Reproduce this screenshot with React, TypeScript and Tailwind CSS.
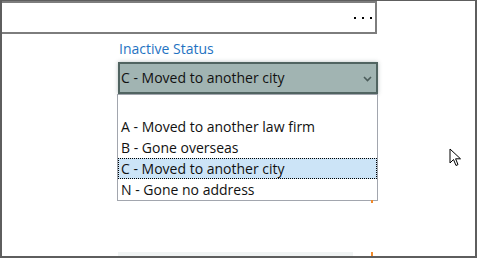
import React from "react";

const OPTIONS = [
  "",
  "A - Moved to another law firm",
  "B - Gone overseas",
  "C - Moved to another city",
  "N - Gone no address",
];

const SELECTED = "C - Moved to another city";

export default function App() {
  return (
    <div
      className="relative w-[477px] h-[258px] overflow-hidden bg-white border-x-2 border-b-2 border-t border-[#5e5e5e] text-[14px] text-[#111]"
      style={{ fontFamily: '"Open Sans", "Noto Sans", sans-serif' }}
    >
      {/* text box with ellipsis button */}
      <div className="w-[375px] h-[33px] border-2 border-l-0 border-[#7d7d7d] flex items-center justify-end pr-[3px]">
        <div className="flex gap-[6px] items-center">
          <span className="block w-[2px] h-[2px] bg-black" />
          <span className="block w-[2px] h-[2px] bg-black" />
          <span className="block w-[2px] h-[2px] bg-black" />
        </div>
      </div>

      {/* Inactive status field */}
      <div className="ml-[115px] mt-[5px] w-[261px]">
        <div className="ml-[2px] h-[20px] leading-[20px] text-[#1f73c2]">Inactive Status</div>
        <div className="mt-[3px] ml-[1px] h-[32px] border-2 border-[#516461] bg-[#a1b4b2] shadow-[0_0_4px_rgba(60,80,80,0.35)] flex items-center justify-between pl-[1px] pr-[4px]">
          <span className="leading-[20px]">{SELECTED}</span>
          <svg width="9" height="6" viewBox="0 0 9 6" className="mt-[1px]">
            <polyline points="1,1 4.5,4.5 8,1" fill="none" stroke="#4b5c5a" strokeWidth="1.6" />
          </svg>
        </div>
        <div className="border border-[#a2a6ae] bg-white">
          {OPTIONS.map((o, i) => {
            const sel = o === SELECTED;
            return (
              <div
                key={i}
                className={
                  "h-[21px] leading-[19px] pl-[2px] border border-dotted " +
                  (sel ? "bg-[#cce4f7] border-black" : "border-transparent")
                }
              >
                {o}
              </div>
            );
          })}
        </div>
      </div>

      {/* faded control below */}
      <div className="absolute left-[116px] top-[251px] w-[235px] h-[5px] bg-[#f1f4f4]" />
      <div className="absolute left-[369px] top-[251px] w-[2px] h-[5px] bg-[#f28a2a]" />
      <div className="absolute left-[369px] top-[199px] w-[2px] h-[3px] bg-[#f28a2a]" />

      {/* mouse cursor */}
      <svg
        className="absolute left-[447px] top-[147px]"
        width="13"
        height="20"
        viewBox="0 0 13 20"
      >
        <path
          d="M1 1 L1 15 L4.5 11.5 L7 17.5 L9 16.6 L6.6 10.8 L11.5 10.8 Z"
          fill="#fff"
          stroke="#000"
          strokeWidth="1"
          strokeLinejoin="miter"
        />
      </svg>
    </div>
  );
}
